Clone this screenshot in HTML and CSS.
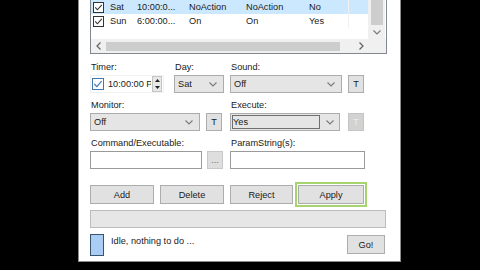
FILE: index.html
```html
<!DOCTYPE html>
<html>
<head>
<meta charset="utf-8">
<link rel="stylesheet" href="styles.css">
</head>
<body>
<div class="window">
  <div class="list">
    <div class="list-main">
      <div class="rows">
        <div class="lrow header">
          <span class="c c1"></span><span class="c c2"></span><span class="c c3"></span><span class="c c4"></span><span class="c c5"></span><span class="c c6"></span>
        </div>
        <div class="lrow sel">
          <span class="c c1"><svg class="chk" width="11" height="11" viewBox="0 0 11 11"><rect x="0.5" y="0.5" width="10" height="10" fill="#fff" stroke="#333"/><path d="M2.2 5.4 L4.4 7.8 L8.8 2.8" fill="none" stroke="#333" stroke-width="1.1"/></svg>Sat</span><span class="c c2">10:00:0...</span><span class="c c3">NoAction</span><span class="c c4">NoAction</span><span class="c c5">No</span><span class="c c6"></span>
        </div>
        <div class="lrow">
          <span class="c c1"><svg class="chk" width="11" height="11" viewBox="0 0 11 11"><rect x="0.5" y="0.5" width="10" height="10" fill="#fff" stroke="#333"/><path d="M2.2 5.4 L4.4 7.8 L8.8 2.8" fill="none" stroke="#333" stroke-width="1.1"/></svg>Sun</span><span class="c c2">6:00:00...</span><span class="c c3">On</span><span class="c c4">On</span><span class="c c5">Yes</span><span class="c c6"></span>
        </div>
      </div>
      <div class="vscroll">
        <div class="vspace"></div>
        <div class="vthumb"></div>
        <div class="varrow"><svg width="8" height="5" viewBox="0 0 8 5"><path d="M0.5 0.5 L4 4 L7.5 0.5" fill="none" stroke="#7a7a7a" stroke-width="1.2"/></svg></div>
      </div>
    </div>
    <div class="list-bottom">
      <div class="hscroll">
        <div class="harrow"><svg width="5" height="8" viewBox="0 0 5 8"><path d="M4.5 0.5 L1 4 L4.5 7.5" fill="none" stroke="#606060" stroke-width="1.2"/></svg></div>
        <div class="hthumb"></div>
        <div class="hspace"></div>
        <div class="harrow"><svg width="5" height="8" viewBox="0 0 5 8"><path d="M0.5 0.5 L4 4 L0.5 7.5" fill="none" stroke="#606060" stroke-width="1.2"/></svg></div>
      </div>
      <div class="corner"></div>
    </div>
  </div>

  <div class="frow first">
    <div class="field w-timer mr10">
      <div class="lbl">Timer:</div>
      <div class="timer">
        <svg class="tchk" width="12" height="12" viewBox="0 0 12 12"><rect x="0.5" y="0.5" width="11" height="11" fill="#fff" stroke="#3d7ab3"/><path d="M2.4 6 L4.9 8.6 L9.6 3.2" fill="none" stroke="#3d7ab3" stroke-width="1.2"/></svg>
        <span class="ttext">10:00:00 PM</span>
        <div class="spin">
          <div class="sp"><svg width="5" height="3" viewBox="0 0 5 3"><path d="M0 3 L2.5 0 L5 3 Z" fill="#222"/></svg></div>
          <div class="sp"><svg width="5" height="3" viewBox="0 0 5 3"><path d="M0 0 L2.5 3 L5 0 Z" fill="#222"/></svg></div>
        </div>
      </div>
    </div>
    <div class="field w-day mr6">
      <div class="lbl">Day:</div>
      <div class="combo"><span class="ctext">Sat</span><svg class="chev" width="8" height="5" viewBox="0 0 8 5"><path d="M0.5 0.5 L4 4 L7.5 0.5" fill="none" stroke="#7a7a7a" stroke-width="1.1"/></svg></div>
    </div>
    <div class="field w-sound mr6">
      <div class="lbl">Sound:</div>
      <div class="combo"><span class="ctext">Off</span><svg class="chev" width="8" height="5" viewBox="0 0 8 5"><path d="M0.5 0.5 L4 4 L7.5 0.5" fill="none" stroke="#7a7a7a" stroke-width="1.1"/></svg></div>
    </div>
    <div class="field w-t">
      <div class="btn tbtn">T</div>
    </div>
  </div>

  <div class="frow">
    <div class="field w-mon mr6">
      <div class="lbl">Monitor:</div>
      <div class="combo"><span class="ctext">Off</span><svg class="chev" width="8" height="5" viewBox="0 0 8 5"><path d="M0.5 0.5 L4 4 L7.5 0.5" fill="none" stroke="#7a7a7a" stroke-width="1.1"/></svg></div>
    </div>
    <div class="field w-t mr8">
      <div class="btn tbtn">T</div>
    </div>
    <div class="field w-exec mr8">
      <div class="lbl">Execute:</div>
      <div class="combo edit"><span class="einner">Yes</span><svg class="chev" width="8" height="5" viewBox="0 0 8 5"><path d="M0.5 0.5 L4 4 L7.5 0.5" fill="none" stroke="#7a7a7a" stroke-width="1.1"/></svg></div>
    </div>
    <div class="field w-t">
      <div class="btn tbtn disabled">T</div>
    </div>
  </div>

  <div class="frow">
    <div class="field w-cmd mr5">
      <div class="lbl">Command/Executable:</div>
      <div class="tbox"></div>
    </div>
    <div class="field w-t mr7">
      <div class="btn dots">...</div>
    </div>
    <div class="field w-param">
      <div class="lbl">ParamString(s):</div>
      <div class="tbox"></div>
    </div>
  </div>

  <div class="brow">
    <div class="btn pbtn w-add">Add</div>
    <div class="btn pbtn w-del">Delete</div>
    <div class="btn pbtn w-rej">Reject</div>
    <div class="btn pbtn w-apply focus">Apply</div>
  </div>

  <div class="progress"></div>

  <div class="status">
    <div class="light"></div>
    <div class="stext">Idle, nothing to do ...</div>
    <div class="btn gobtn">Go!</div>
  </div>
</div>
</body>
</html>
```

FILE: styles.css
```css
* { box-sizing: border-box; }

body {
  margin: 0;
  width: 480px;
  height: 270px;
  overflow: hidden;
  background: #000;
  font-family: "Liberation Sans", Arial, sans-serif;
  font-size: 9.2px;
  color: #1a1a1a;
}

.window {
  margin-left: 78px;
  margin-top: -17px;
  width: 323px;
  height: 279px;
  background: #fff;
  border: 1px solid #8c8c8c;
  border-top: none;
  padding-left: 11px;
}

/* list view */
.list {
  width: 297px;
  height: 71px;
  border: 1px solid #828790;
  display: flex;
  flex-direction: column;
}
.list-main { display: flex; height: 55px; }
.rows { width: 277px; }
.lrow { display: flex; height: 14px; line-height: 14px; white-space: nowrap; }
.lrow.header { height: 16px; line-height: 16px; }
.lrow.header .c { border-right: 1px solid #e5e5e5; }
.lrow.sel { background: #cce8ff; }
.c { display: flex; align-items: center; overflow: hidden; padding-left: 3px; }
.c1 { width: 43px; padding-left: 2px; }
.c2 { width: 52px; }
.c3 { width: 57px; }
.c4 { width: 63px; }
.c5 { width: 42px; }
.c6 { width: 20px; border-left: 1px solid #f0f0f0; }
.chk { margin-right: 6px; flex: none; }

.vscroll {
  width: 17px;
  background: #f0f0f0;
  display: flex;
  flex-direction: column;
  align-items: center;
}
.vspace { height: 14px; }
.vthumb { width: 12px; height: 27px; background: #cdcdcd; }
.varrow { height: 14px; display: flex; align-items: center; justify-content: center; }

.list-bottom { display: flex; height: 14px; }
.hscroll {
  width: 277px;
  background: #f0f0f0;
  display: flex;
  align-items: center;
}
.harrow { width: 14px; height: 14px; display: flex; align-items: center; justify-content: center; }
.hthumb { width: 234px; height: 9px; margin-left: 1px; background: #cdcdcd; }
.hspace { flex: 1; }
.corner { width: 18px; background: #f0f0f0; }

/* form rows */
.frow { display: flex; margin-top: 6px; align-items: flex-end; }
.frow.first { margin-top: 7px; }
.field { display: flex; flex-direction: column; }
.lbl { height: 12px; line-height: 12px; margin-bottom: 2px; padding-left: 1px; white-space: nowrap; }

.mr5 { margin-right: 5px; }
.mr6 { margin-right: 6px; }
.mr7 { margin-right: 7px; }
.mr8 { margin-right: 8px; }
.mr10 { margin-right: 10px; }

.w-timer { width: 74px; }
.w-day { width: 50px; }
.w-sound { width: 112px; }
.w-t { width: 16px; }
.w-mon { width: 110px; }
.w-exec { width: 110px; }
.w-cmd { width: 112px; }
.w-param { width: 135px; }

.timer {
  height: 18px;
  display: flex;
  align-items: center;
  border: 1px solid #f2f2f2;
  padding-left: 1px;
}
.tchk { flex: none; }
.ttext { width: 43px; margin-left: 4px; overflow: hidden; white-space: nowrap; }
.spin {
  width: 10px;
  height: 16px;
  margin-left: 1px;
  border: 1px solid #c4c4c4;
  background: #e8e8e8;
  display: flex;
  flex-direction: column;
}
.sp { flex: 1; display: flex; align-items: center; justify-content: center; }

.combo {
  height: 18px;
  background: #e5e5e5;
  border: 1px solid #acacac;
  display: flex;
  align-items: center;
  padding-left: 3px;
  padding-right: 6px;
}
.ctext { flex: 1; white-space: nowrap; }
.chev { flex: none; }
.combo.edit { padding-left: 1px; padding-right: 5px; }
.einner {
  width: 95px;
  height: 14px;
  line-height: 12px;
  border: 1px solid #6f6f6f;
  margin-right: 6px;
  padding-left: 0;
}

.btn {
  background: #e1e1e1;
  border: 1px solid #adadad;
  display: flex;
  align-items: center;
  justify-content: center;
  white-space: nowrap;
}
.tbtn { height: 18px; }
.tbtn.disabled { background: #d2d2d2; border-color: #c4c4c4; color: #ececec; }
.dots { height: 18px; background: #dedede; border-color: #c8c8c8; color: #6d6d6d; line-height: 10px; }

.tbox { height: 18px; background: #fff; border: 1px solid #9a9a9a; }

/* buttons */
.brow { display: flex; margin-top: 16px; }
.pbtn { height: 19px; }
.w-add { width: 64px; margin-right: 6px; }
.w-del { width: 64px; margin-right: 6px; }
.w-rej { width: 63px; margin-right: 5px; }
.w-apply { width: 66px; }
.focus { outline: 2px solid #a6d46e; outline-offset: 1px; }

.progress {
  margin-top: 6px;
  width: 296px;
  height: 18px;
  background: #e6e6e6;
  border: 1px solid #bcbcbc;
}

.status { display: flex; margin-top: 6px; width: 296px; align-items: flex-start; }
.light { width: 14px; height: 22px; background: #a9cdf4; border: 1px solid #3a5470; flex: none; }
.stext { margin-left: 7px; line-height: 12px; padding-top: 1px; }
.gobtn { margin-left: auto; margin-right: 1px; margin-top: 1px; width: 38px; height: 19px; }
```
